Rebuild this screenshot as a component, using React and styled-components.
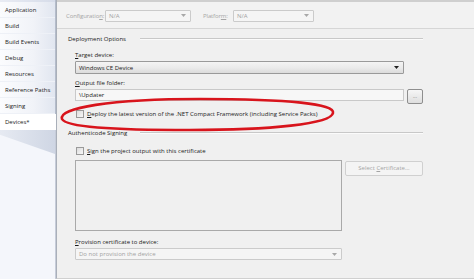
import styled, { createGlobalStyle } from "styled-components";

const tabs = [
  "Application",
  "Build",
  "Build Events",
  "Debug",
  "Resources",
  "Reference Paths",
  "Signing",
  "Devices*",
];

function Arrow({ disabled }) {
  return (
    <svg width="5" height="3" viewBox="0 0 5 3">
      <path d="M0 0h5L2.5 3z" fill={disabled ? "#a8a8a8" : "#202020"} />
    </svg>
  );
}

function Check({ label, $top }) {
  return (
    <CheckRow $top={$top}>
      <Box />
      <span>{label}</span>
    </CheckRow>
  );
}

function Header({ children, $top }) {
  return (
    <SectionHead $top={$top}>
      <span>{children}</span>
      <Rule />
    </SectionHead>
  );
}

export default function App() {
  return (
    <Page>
      <Global />
      <Sidebar>
        {tabs.map((t, i) => (
          <Tab key={t} $active={i === tabs.length - 1}>
            {t}
          </Tab>
        ))}
        <Tail />
      </Sidebar>

      <Content>
        <Toolbar>
          <Dim $w={39}>
            Configuratio<u>n</u>:
          </Dim>
          <Combo $w={86} $disabled>
            <span>N/A</span>
            <Arrow disabled />
          </Combo>
          <Dim $w={30} $left={12}>
            Platfor<u>m</u>:
          </Dim>
          <Combo $w={81} $disabled>
            <span>N/A</span>
            <Arrow disabled />
          </Combo>
        </Toolbar>

        <Body>
          <Header>Deployment Options</Header>
          <Fields>
            <Label $top={6}>
              <u>T</u>arget device:
            </Label>
            <Combo $w={329} $h={13} $top={1}>
              <span>Windows CE Device</span>
              <Arrow />
            </Combo>
            <Label $top={4}>
              <u>O</u>utput file folder:
            </Label>
            <InputRow>
              <TextBox>\Updater</TextBox>
              <Browse>...</Browse>
            </InputRow>
          </Fields>
          <Check
            label={
              <>
                <u>D</u>eploy the latest version of the .NET Compact Framework
                (including Service Packs)
              </>
            }
          />

          <Header $top={9}>Authenticode Signing</Header>
          <Fields>
            <Check
              $top={8}
              label={
                <>
                  <u>S</u>ign the project output with this certificate
                </>
              }
            />
            <CertRow>
              <CertArea />
              <Button>
                Select <u>C</u>ertificate...
              </Button>
            </CertRow>
            <Label $top={6}>
              <u>P</u>rovision certificate to device:
            </Label>
            <Combo $w={267} $top={1} $disabled>
              <span>Do not provision the device</span>
              <Arrow disabled />
            </Combo>
          </Fields>
        </Body>
      </Content>

      <Circle width="474" height="279" viewBox="0 0 474 279">
        <path
          d="M62 119 C58 108 110 99 200 99 C290 99 335 104 333 113 C331 124 270 130 190 130 C110 130 66 127 62 119 Z"
          fill="none"
          stroke="#d8141c"
          strokeWidth="2.6"
        />
      </Circle>
    </Page>
  );
}

const Global = createGlobalStyle`
  html, body {
    margin: 0;
    padding: 0;
    background: #f0f0f0;
  }
  body {
    font-family: "Open Sans", "Liberation Sans", sans-serif;
    font-size: 6px;
    color: #1a1a1a;
  }
  u {
    text-decoration-thickness: 0.5px;
    text-underline-offset: 1px;
  }
`;

const Page = styled.div`
  position: relative;
  display: flex;
  width: 474px;
  height: 279px;
  overflow: hidden;
`;

const Sidebar = styled.div`
  display: flex;
  flex-direction: column;
  width: 56px;
  padding-top: 2px;
  box-sizing: border-box;
  background: linear-gradient(90deg, #e9ecf4, #d6dce9);
  border-right: 1px solid #b4bccb;
`;

const Tab = styled.div`
  height: 16px;
  line-height: 16px;
  padding-left: 5px;
  box-sizing: border-box;
  white-space: nowrap;
  border-bottom: 1px solid ${(p) => (p.$active ? "#ffffff" : "#eef1f7")};
  background: ${(p) =>
    p.$active
      ? "#ffffff"
      : "linear-gradient(90deg, #fbfcfe 0%, #f1f3f8 60%, #e1e6f0 100%)"};
  margin-right: ${(p) => (p.$active ? "-1px" : "0")};
`;

const Tail = styled.div`
  flex: 1;
  background: #f4f6fb;
  position: relative;
  margin-right: -1px;
  border-right: 1px solid #c6ccd9;

  &::before {
    content: "";
    position: absolute;
    inset: 0 0 auto 0;
    height: 24px;
    background: linear-gradient(90deg, #e6eaf2, #cfd6e4);
    clip-path: polygon(0 0, 100% 0, 100% 100%, 0 20%);
  }
`;

const Content = styled.div`
  flex: 1;
  display: flex;
  flex-direction: column;
  background: #f0f0f0;
  border-left: 1px solid #a9afb9;
  border-bottom: 1px solid #d0d0d0;
`;

const Toolbar = styled.div`
  display: flex;
  align-items: center;
  height: 29px;
  box-sizing: border-box;
  padding: 1px 0 0 9px;
  border-top: 2px solid #cfcfcf;
  border-bottom: 1px solid #d6d6d6;
  background: #f2f2f2;
`;

const Dim = styled.span`
  width: ${(p) => p.$w}px;
  margin-left: ${(p) => p.$left || 0}px;
  white-space: nowrap;
  letter-spacing: -0.12px;
  color: #a6a6a6;
`;

const Combo = styled.div`
  display: flex;
  align-items: center;
  justify-content: space-between;
  width: ${(p) => p.$w}px;
  height: ${(p) => p.$h || 12}px;
  margin-top: ${(p) => p.$top || 0}px;
  padding: 0 4px 0 3px;
  box-sizing: border-box;
  color: ${(p) => (p.$disabled ? "#a2a2a2" : "#1a1a1a")};
  border: 1px solid ${(p) => (p.$disabled ? "#cbcbcb" : "#9a9a9a")};
  border-radius: 1px;
  background: ${(p) =>
    p.$disabled
      ? "#f5f5f5"
      : "linear-gradient(180deg, #f4f4f4 0%, #ebebeb 50%, #dcdcdc 100%)"};
`;

const Body = styled.div`
  display: flex;
  flex-direction: column;
  padding: 5px 51px 0 11px;
`;

const SectionHead = styled.div`
  display: grid;
  grid-template-columns: 72px 1fr;
  align-items: center;
  height: 10px;
  margin-top: ${(p) => p.$top || 0}px;
`;

const Rule = styled.div`
  height: 1px;
  background: #c8c8c8;
  border-bottom: 1px solid #fbfbfb;
`;

const Fields = styled.div`
  display: flex;
  flex-direction: column;
  align-items: flex-start;
  padding-left: 7px;
`;

const Label = styled.div`
  height: 10px;
  line-height: 10px;
  margin-top: ${(p) => p.$top || 0}px;
`;

const InputRow = styled.div`
  display: flex;
  align-items: flex-start;
  gap: 3px;
  margin-top: 1px;
`;

const TextBox = styled.div`
  width: 329px;
  height: 12px;
  line-height: 10px;
  padding-left: 3px;
  box-sizing: border-box;
  border: 1px solid #c9c9c9;
  background: #f7f7f7;
`;

const Browse = styled.div`
  width: 16px;
  height: 15px;
  box-sizing: border-box;
  border: 1px solid #8e8e8e;
  border-radius: 2px;
  background: linear-gradient(180deg, #f6f6f6, #dedede);
  color: #707070;
  font-size: 5px;
  line-height: 12px;
  text-align: center;
`;

const CheckRow = styled.div`
  display: flex;
  align-items: center;
  gap: 3px;
  height: 10px;
  margin: ${(p) => p.$top ?? 5}px 0 0 ${(p) => (p.$top ? 1 : 8)}px;
`;

const Box = styled.div`
  width: 8px;
  height: 8px;
  box-sizing: border-box;
  border: 1px solid #9a9a9a;
  background: linear-gradient(135deg, #dcdcdc, #f8f8f8);
`;

const CertRow = styled.div`
  display: flex;
  align-items: flex-start;
  gap: 3px;
  margin-top: 4px;
`;

const CertArea = styled.div`
  width: 267px;
  height: 71px;
  box-sizing: border-box;
  border: 1px solid #a9a9a9;
  background: #f0f0f0;
`;

const Button = styled.div`
  width: 78px;
  height: 15px;
  margin-top: 1px;
  box-sizing: border-box;
  border: 1px solid #d0d0d0;
  border-radius: 2px;
  background: #f4f4f4;
  color: #a4a4a4;
  line-height: 13px;
  text-align: center;
`;

const Circle = styled.svg`
  position: absolute;
  left: 0;
  top: 0;
  pointer-events: none;
`;
